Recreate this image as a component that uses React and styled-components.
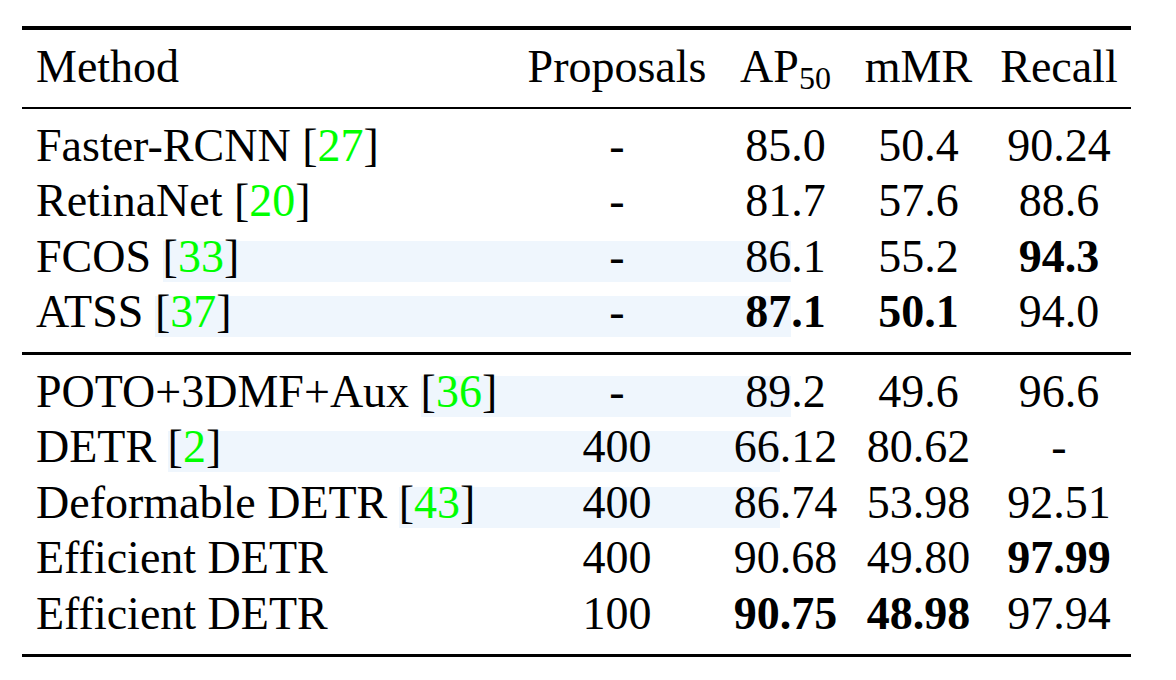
import React from "react";
import styled, { createGlobalStyle } from "styled-components";

const GlobalStyle = createGlobalStyle`
  html, body {
    margin: 0;
    padding: 0;
    background: #ffffff;
  }
  body {
    font-family: "Liberation Serif", "Times New Roman", serif;
    color: #000;
  }
`;

const HL = "#eff6fd";
const band = `linear-gradient(to bottom, transparent 12px, ${HL} 12px, ${HL} 53px, transparent 53px)`;

const COLS = "491px 208px 129px 137px 144px";

const groups = [
  [
    { name: "Faster-RCNN", ref: "27", props: "-", ap: "85.0", mmr: "50.4", recall: "90.24" },
    { name: "RetinaNet", ref: "20", props: "-", ap: "81.7", mmr: "57.6", recall: "88.6" },
    { name: "FCOS", ref: "33", props: "-", ap: "86.1", mmr: "55.2", recall: "94.3", hl: true, bold: ["recall"] },
    { name: "ATSS", ref: "37", props: "-", ap: "87.1", mmr: "50.1", recall: "94.0", hl: true, bold: ["ap", "mmr"] },
  ],
  [
    { name: "POTO+3DMF+Aux", ref: "36", props: "-", ap: "89.2", mmr: "49.6", recall: "96.6", hl: true },
    { name: "DETR", ref: "2", props: "400", ap: "66.12", mmr: "80.62", recall: "-", hl: true },
    { name: "Deformable DETR", ref: "43", props: "400", ap: "86.74", mmr: "53.98", recall: "92.51", hl: true },
    { name: "Efficient DETR", props: "400", ap: "90.68", mmr: "49.80", recall: "97.99", bold: ["recall"] },
    { name: "Efficient DETR", props: "100", ap: "90.75", mmr: "48.98", recall: "97.94", bold: ["ap", "mmr"] },
  ],
];

const App = () => {
  return (
    <React.Fragment>
      <GlobalStyle />
      <Page>
        <Table>
          <Rule $heavy />
          <Group>
            <Row>
              <MethodCell>Method</MethodCell>
              <Cell>Proposals</Cell>
              <Cell>
                AP<Sub>50</Sub>
              </Cell>
              <Cell>mMR</Cell>
              <Cell>Recall</Cell>
            </Row>
          </Group>
          {groups.map((rows, gi) => (
            <React.Fragment key={gi}>
              <Rule />
              <Group>
                {rows.map((r, i) => {
                  const [intPart, decPart] = r.ap.split(".");
                  const bold = r.bold || [];
                  return (
                    <Row key={i}>
                      <MethodCell>
                        <Name>{r.ref ? r.name + " " : r.name}</Name>
                        {r.ref && (
                          <Cite $hl={r.hl}>
                            [<Ref>{r.ref}</Ref>]
                          </Cite>
                        )}
                      </MethodCell>
                      <Cell $hl={r.hl}>{r.props}</Cell>
                      <ApCell $bold={bold.includes("ap")}>
                        <Spacer $hl={r.hl} />
                        <Part $hl={r.hl}>{intPart}</Part>
                        <Part>.{decPart}</Part>
                        <Spacer />
                      </ApCell>
                      <Cell $bold={bold.includes("mmr")}>{r.mmr}</Cell>
                      <Cell $bold={bold.includes("recall")}>{r.recall}</Cell>
                    </Row>
                  );
                })}
              </Group>
            </React.Fragment>
          ))}
          <Rule $heavy />
        </Table>
      </Page>
    </React.Fragment>
  );
};

export default App;

const Page = styled.div`
  width: 1176px;
  height: 680px;
  padding: 26px 0 0 22px;
  box-sizing: border-box;
  overflow: hidden;
`;

const Table = styled.div`
  width: 1109px;
  display: flex;
  flex-direction: column;
  font-size: 46px;
`;

const Rule = styled.div`
  height: ${(p) => (p.$heavy ? "3.6px" : "2.4px")};
  background: #000;
`;

const Group = styled.div`
  padding: 9px 0 12.5px;
`;

const Row = styled.div`
  display: grid;
  grid-template-columns: ${COLS};
  height: 55.5px;
  line-height: 55.5px;
  white-space: nowrap;
`;

const Cell = styled.div`
  text-align: center;
  font-weight: ${(p) => (p.$bold ? 700 : 400)};
  background: ${(p) => (p.$hl ? band : "none")};
`;

const MethodCell = styled.div`
  display: flex;
  padding-left: 14px;
`;

const Name = styled.span`
  white-space: pre;
`;

const Cite = styled.span`
  flex: 1;
  background: ${(p) => (p.$hl ? band : "none")};
`;

const Ref = styled.span`
  color: #00ff00;
`;

const ApCell = styled.div`
  display: flex;
  font-weight: ${(p) => (p.$bold ? 700 : 400)};
`;

const Spacer = styled.span`
  flex: 1;
  background: ${(p) => (p.$hl ? band : "none")};
`;

const Part = styled.span`
  background: ${(p) => (p.$hl ? band : "none")};
`;

const Sub = styled.sub`
  font-size: 32px;
  line-height: 0;
  vertical-align: -7px;
`;
